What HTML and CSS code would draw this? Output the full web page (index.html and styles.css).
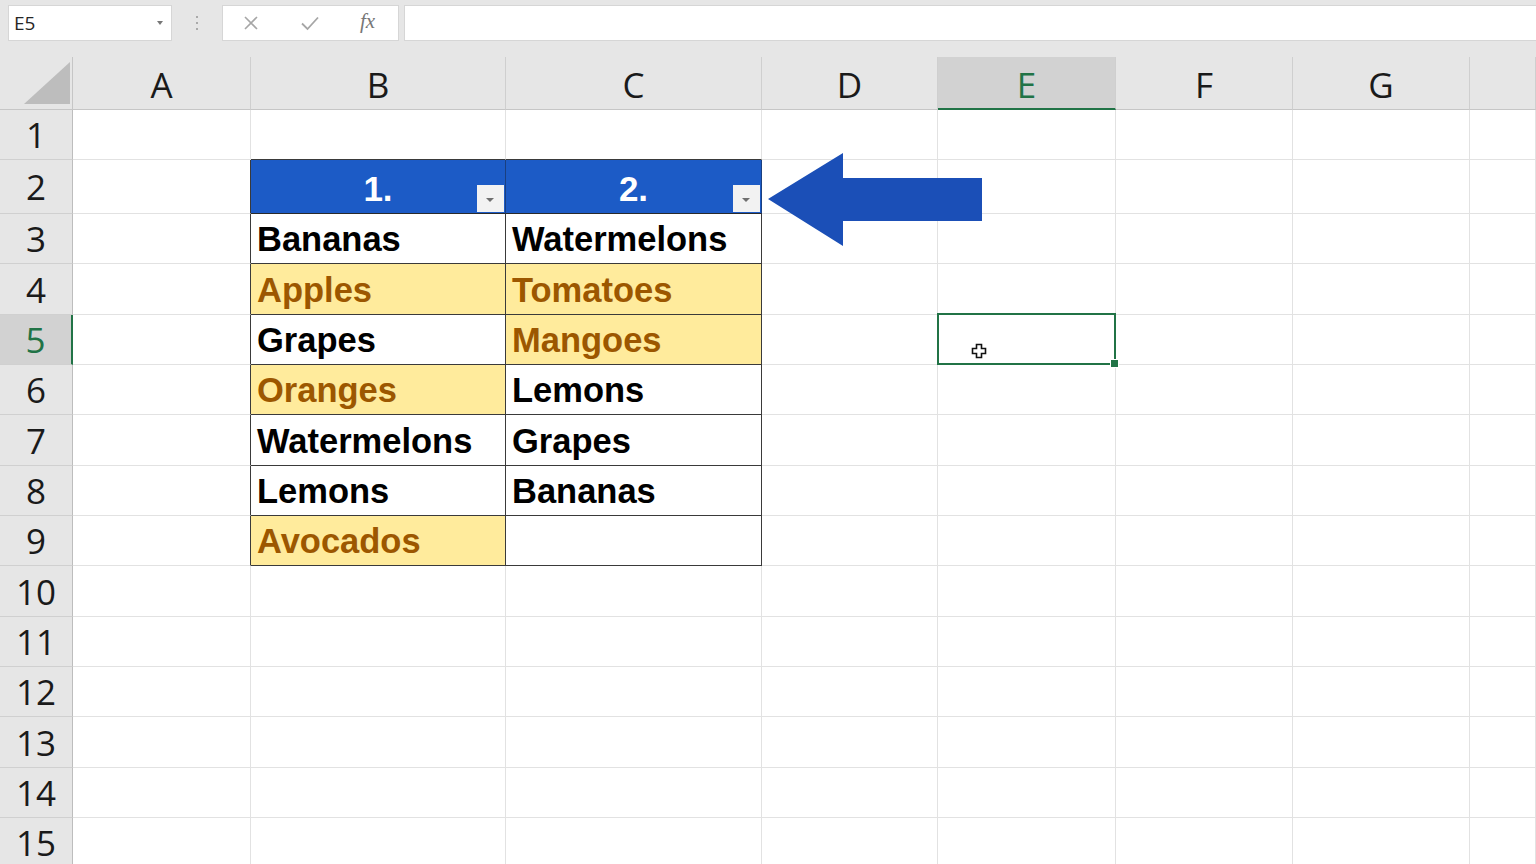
FILE: index.html
```html
<!DOCTYPE html>
<html>
<head>
<meta charset="utf-8">
<link rel="stylesheet" href="styles.css">
</head>
<body>
<div class="topbar">
  <div class="namebox"><span>E5</span><span class="nb-arrow"></span></div>
  <div class="dots"><i></i><i></i><i></i></div>
  <div class="fbuttons">
    <svg class="ico x" width="16" height="16" viewBox="0 0 16 16"><path d="M2 2L14 14M14 2L2 14" stroke="#a6a6a6" stroke-width="1.6" fill="none"/></svg>
    <svg class="ico ok" width="20" height="16" viewBox="0 0 20 16"><path d="M2 8.5L7.5 14L18 2.5" stroke="#a6a6a6" stroke-width="1.8" fill="none"/></svg>
    <span class="fx">fx</span>
  </div>
  <div class="finput"></div>
</div>

<div class="sheet">
  <div class="corner"><svg width="73" height="53" viewBox="0 0 73 53"><polygon points="24,47 70,47 70,5" fill="#bdbdbd"/></svg></div>
  <div class="ch">A</div><div class="ch">B</div><div class="ch">C</div><div class="ch">D</div><div class="ch sel">E</div><div class="ch">F</div><div class="ch">G</div><div class="ch"></div>

  <div class="rh">1</div><div class="c"></div><div class="c tt"></div><div class="c tt"></div><div class="c"></div><div class="c"></div><div class="c"></div><div class="c"></div><div class="c"></div>

  <div class="rh">2</div><div class="c tl"></div>
  <div class="c t th">1.<span class="filter"></span></div>
  <div class="c t th">2.<span class="filter"></span></div>
  <div class="c arrow-host">
    <svg class="arrow" width="218" height="96" viewBox="0 0 218 96"><polygon points="2,47 77,1 77,26 216,26 216,69 77,69 77,94" fill="#1b4fb7"/></svg>
  </div>
  <div class="c"></div><div class="c"></div><div class="c"></div><div class="c"></div>

  <div class="rh">3</div><div class="c tl"></div><div class="c t">Bananas</div><div class="c t">Watermelons</div><div class="c"></div><div class="c"></div><div class="c"></div><div class="c"></div><div class="c"></div>

  <div class="rh">4</div><div class="c tl"></div><div class="c t y">Apples</div><div class="c t y">Tomatoes</div><div class="c"></div><div class="c"></div><div class="c"></div><div class="c"></div><div class="c"></div>

  <div class="rh sel">5</div><div class="c tl"></div><div class="c t">Grapes</div><div class="c t y">Mangoes</div><div class="c"></div>
  <div class="c active">
    <svg class="cursor" width="16" height="16" viewBox="0 0 16 16"><path d="M5.5 1.5H10.5V5.5H14.5V10.5H10.5V14.5H5.5V10.5H1.5V5.5H5.5Z" fill="#fff" stroke="#111" stroke-width="1.6"/></svg>
  </div>
  <div class="c"></div><div class="c"></div><div class="c"></div>

  <div class="rh">6</div><div class="c tl"></div><div class="c t y">Oranges</div><div class="c t">Lemons</div><div class="c"></div><div class="c"></div><div class="c"></div><div class="c"></div><div class="c"></div>

  <div class="rh">7</div><div class="c tl"></div><div class="c t">Watermelons</div><div class="c t">Grapes</div><div class="c"></div><div class="c"></div><div class="c"></div><div class="c"></div><div class="c"></div>

  <div class="rh">8</div><div class="c tl"></div><div class="c t">Lemons</div><div class="c t">Bananas</div><div class="c"></div><div class="c"></div><div class="c"></div><div class="c"></div><div class="c"></div>

  <div class="rh">9</div><div class="c tl"></div><div class="c t y">Avocados</div><div class="c t"></div><div class="c"></div><div class="c"></div><div class="c"></div><div class="c"></div><div class="c"></div>

  <div class="rh">10</div><div class="c"></div><div class="c"></div><div class="c"></div><div class="c"></div><div class="c"></div><div class="c"></div><div class="c"></div><div class="c"></div>
  <div class="rh">11</div><div class="c"></div><div class="c"></div><div class="c"></div><div class="c"></div><div class="c"></div><div class="c"></div><div class="c"></div><div class="c"></div>
  <div class="rh">12</div><div class="c"></div><div class="c"></div><div class="c"></div><div class="c"></div><div class="c"></div><div class="c"></div><div class="c"></div><div class="c"></div>
  <div class="rh">13</div><div class="c"></div><div class="c"></div><div class="c"></div><div class="c"></div><div class="c"></div><div class="c"></div><div class="c"></div><div class="c"></div>
  <div class="rh">14</div><div class="c"></div><div class="c"></div><div class="c"></div><div class="c"></div><div class="c"></div><div class="c"></div><div class="c"></div><div class="c"></div>
  <div class="rh">15</div><div class="c"></div><div class="c"></div><div class="c"></div><div class="c"></div><div class="c"></div><div class="c"></div><div class="c"></div><div class="c"></div>
</div>
</body>
</html>
```

FILE: styles.css
```css
* { box-sizing: border-box; }
html, body { margin: 0; padding: 0; }
body {
  width: 1536px;
  height: 864px;
  overflow: hidden;
  background: #e6e6e6;
  font-family: "Open Sans", "Noto Sans", sans-serif;
}

.topbar {
  height: 57px;
  padding: 5px 0 0 8px;
  display: flex;
  align-items: flex-start;
}
.namebox {
  width: 164px;
  height: 36px;
  background: #fff;
  border: 1px solid #d6d6d6;
  display: flex;
  align-items: center;
  justify-content: space-between;
  padding: 0 8px 0 5px;
  font-size: 19px;
  color: #262626;
}
.nb-arrow {
  width: 0; height: 0;
  border-left: 3.5px solid transparent;
  border-right: 3.5px solid transparent;
  border-top: 4px solid #777;
}
.dots {
  width: 50px;
  height: 36px;
  display: flex;
  flex-direction: column;
  align-items: center;
  justify-content: center;
  gap: 4px;
}
.dots i {
  display: block;
  width: 2px; height: 2px;
  background: #aaa;
}
.fbuttons {
  width: 177px;
  height: 36px;
  background: #fff;
  border: 1px solid #d6d6d6;
  display: flex;
  align-items: center;
  padding: 0 0 0 20px;
}
.ico.x { margin-right: 41px; }
.ico.ok { margin-right: 40px; }
.fx {
  font-family: "Liberation Serif", serif;
  font-style: italic;
  font-size: 21px;
  color: #777;
  margin-top: -3px;
}
.finput {
  flex: 1;
  margin-left: 5px;
  height: 36px;
  background: #fff;
  border: 1px solid #d6d6d6;
  border-right: none;
}

.sheet {
  display: grid;
  grid-template-columns: 73px 178px 255px 256px 176px 178px 177px 177px 1fr;
  grid-template-rows: 53px 50px 54px 50px 51px 50px 50px 51px 50px 50px 51px 50px 50px 51px 50px 50px;
  background: #fff;
}
.corner {
  background: #e6e6e6;
  border-right: 1px solid #c6c6c6;
  border-bottom: 1px solid #c6c6c6;
}
.corner svg { display: block; }
.ch {
  background: #e6e6e6;
  border-right: 1px solid #cfcfcf;
  border-bottom: 1px solid #c6c6c6;
  display: flex;
  align-items: center;
  justify-content: center;
  font-size: 35px;
  color: #1a1a1a;
  padding-top: 2px;
}
.ch.sel {
  background: #d2d2d2;
  color: #217346;
  border-bottom: 2px solid #217346;
  padding-top: 4px;
}
.rh {
  background: #e6e6e6;
  border-right: 1px solid #bdbdbd;
  border-bottom: 1px solid #d0d0d0;
  display: flex;
  align-items: center;
  justify-content: center;
  font-size: 35px;
  color: #1a1a1a;
}
.rh.sel {
  background: #d2d2d2;
  color: #217346;
  border-right: 2px solid #217346;
}
.c {
  background: #fff;
  border-right: 1px solid #e2e2e2;
  border-bottom: 1px solid #e2e2e2;
  position: relative;
}
.c.tl { border-right-color: #3a3a3a; }
.c.tt { border-bottom-color: #3a3a3a; }
.c.t {
  border-right-color: #3a3a3a;
  border-bottom-color: #3a3a3a;
  display: flex;
  align-items: center;
  padding: 2px 0 0 6px;
  font-family: "Liberation Sans", Arial, sans-serif;
  font-weight: 700;
  font-size: 34.5px;
  color: #000;
  white-space: nowrap;
}
.c.y {
  background: #ffeb9c;
  color: #9c5700;
}
.c.th {
  background: #1c5bc6;
  color: #fff;
  justify-content: center;
  padding: 4px 0 0 0;
  font-size: 35px;
  border-right-color: #1a3f80;
  border-bottom-color: #2a2a2a;
}
.filter {
  position: absolute;
  right: 1px;
  bottom: 1px;
  width: 27px;
  height: 27px;
  background: #f2f2f2;
}
.filter::after {
  content: "";
  position: absolute;
  left: 9px;
  top: 13px;
  border-left: 4.5px solid transparent;
  border-right: 4.5px solid transparent;
  border-top: 4.5px solid #6f6f6f;
}
.arrow {
  position: absolute;
  left: 4px;
  top: -8px;
  z-index: 2;
}
.active::after {
  content: "";
  position: absolute;
  left: -1px;
  top: -2px;
  right: -1px;
  bottom: -1px;
  border: 2px solid #217346;
}
.active::before {
  content: "";
  position: absolute;
  right: -4px;
  bottom: -4px;
  width: 7px;
  height: 7px;
  background: #217346;
  border: 1px solid #fff;
  z-index: 3;
}
.cursor {
  position: absolute;
  left: 33px;
  top: 28px;
}
```
